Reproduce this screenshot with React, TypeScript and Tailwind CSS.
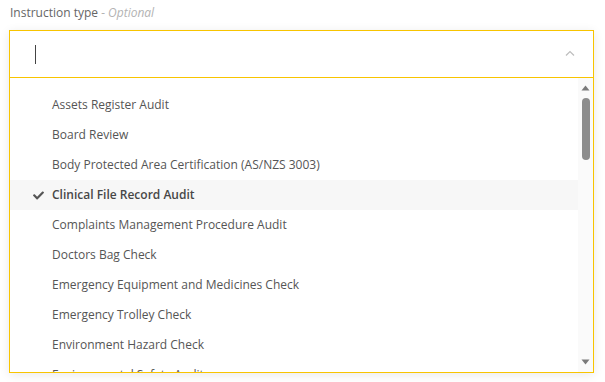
import React from "react";
import { FaCheck } from "react-icons/fa";

const items = [
  "Assets Register Audit",
  "Board Review",
  "Body Protected Area Certification (AS/NZS 3003)",
  "Clinical File Record Audit",
  "Complaints Management Procedure Audit",
  "Doctors Bag Check",
  "Emergency Equipment and Medicines Check",
  "Emergency Trolley Check",
  "Environment Hazard Check",
  "Environmental Safety Audit",
];

const selected = "Clinical File Record Audit";

export default function App() {
  return (
    <div className="h-[382px] w-[605px] bg-white px-[9px] pt-[3px] font-['Open_Sans',sans-serif]">
      <div className="h-[19px] pl-[1px] text-[12px] leading-[19px] text-[#666]">
        Instruction type <span className="italic text-[#b3b3b3]">- Optional</span>
      </div>
      <div className="mt-[8px] w-[585px] shadow-[0_2px_10px_rgba(0,0,0,0.09)]">
        <div className="flex h-[48px] items-center border border-[#f8c400] bg-white pl-[25px] pr-[18px]">
          <span className="h-[19px] w-[1px] bg-[#444]" />
          <span className="flex-1" />
          <svg width="10" height="6" viewBox="0 0 10 6" className="mt-[-2px]">
            <path d="M1 5.5 L5 1.5 L9 5.5" fill="none" stroke="#bdbdbd" strokeWidth="1.2" />
          </svg>
        </div>
        <div className="flex h-[295px] border-x border-b border-[#f8c400] bg-white">
          <ul className="flex-1 overflow-hidden pt-[12px]">
            {items.map((it) => {
              const sel = it === selected;
              return (
                <li
                  key={it}
                  className={`flex h-[30px] items-center text-[12px] ${sel ? "bg-[#f7f7f7] font-semibold text-[#474747]" : "text-[#555]"}`}
                >
                  <span className="flex w-[42px] justify-end pr-[8px]">
                    {sel && <FaCheck className="h-[11px] w-[11px] text-[#555]" />}
                  </span>
                  {it}
                </li>
              );
            })}
          </ul>
          <div className="flex w-[15px] flex-col items-center bg-[#fafafa] pt-[7px] pb-[7px]">
            <svg width="9" height="6" viewBox="0 0 9 6">
              <path d="M4.5 0.5 L8.5 5.5 L0.5 5.5 Z" fill="#7a7a7a" />
            </svg>
            <div className="mt-[7px] h-[62px] w-[8px] rounded-full bg-[#8c8c8c]" />
            <div className="flex-1" />
            <svg width="9" height="6" viewBox="0 0 9 6">
              <path d="M0.5 0.5 L8.5 0.5 L4.5 5.5 Z" fill="#7a7a7a" />
            </svg>
          </div>
        </div>
      </div>
    </div>
  );
}
